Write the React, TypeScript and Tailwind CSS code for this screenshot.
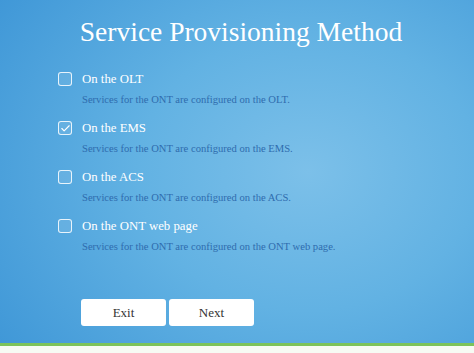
import { Check } from "lucide-react";

const options = [
  { label: "On the OLT", desc: "Services for the ONT are configured on the OLT.", checked: false },
  { label: "On the EMS", desc: "Services for the ONT are configured on the EMS.", checked: true },
  { label: "On the ACS", desc: "Services for the ONT are configured on the ACS.", checked: false },
  { label: "On the ONT web page", desc: "Services for the ONT are configured on the ONT web page.", checked: false },
];

export default function App() {
  return (
    <div className="w-[474px] h-[353px] flex flex-col font-['Liberation_Serif',serif] overflow-hidden">
      <div className="h-[343px] flex flex-col bg-[radial-gradient(ellipse_80%_90%_at_65%_50%,#7cc0e9_0%,#62b2e3_45%,#3f97d7_100%)]">
        <h1 className="pt-[16px] pl-[8px] h-[48px] text-center text-[27.5px] leading-[32px] text-white">
          Service Provisioning Method
        </h1>

        <div className="mt-[23px] pl-[58px] flex flex-col gap-[13px]">
          {options.map((o) => (
            <div key={o.label} className="flex flex-col">
              <div className="h-[16px] flex items-center gap-[10px]">
                <span className="w-[14px] h-[14px] rounded-[3px] border-[1.5px] border-white/85 bg-white/10 flex items-center justify-center">
                  {o.checked && <Check className="w-[11px] h-[11px] text-white" strokeWidth={2.5} />}
                </span>
                <span className="text-[12.8px] leading-[16px] text-white">{o.label}</span>
              </div>
              <p className="mt-[6px] ml-[24px] text-[10.6px] leading-[14px] text-[#2f6cae]">{o.desc}</p>
            </div>
          ))}
        </div>

        <div className="mt-[45px] pl-[81px] flex gap-[3px]">
          <button className="w-[85px] h-[27px] rounded-[3px] bg-white text-[13px] text-[#333]">Exit</button>
          <button className="w-[85px] h-[27px] rounded-[3px] bg-white text-[13px] text-[#333]">Next</button>
        </div>
      </div>
      <div className="h-[3px] bg-[#7cc35a]" />
      <div className="flex-1 bg-[#f7fbf4]" />
    </div>
  );
}
